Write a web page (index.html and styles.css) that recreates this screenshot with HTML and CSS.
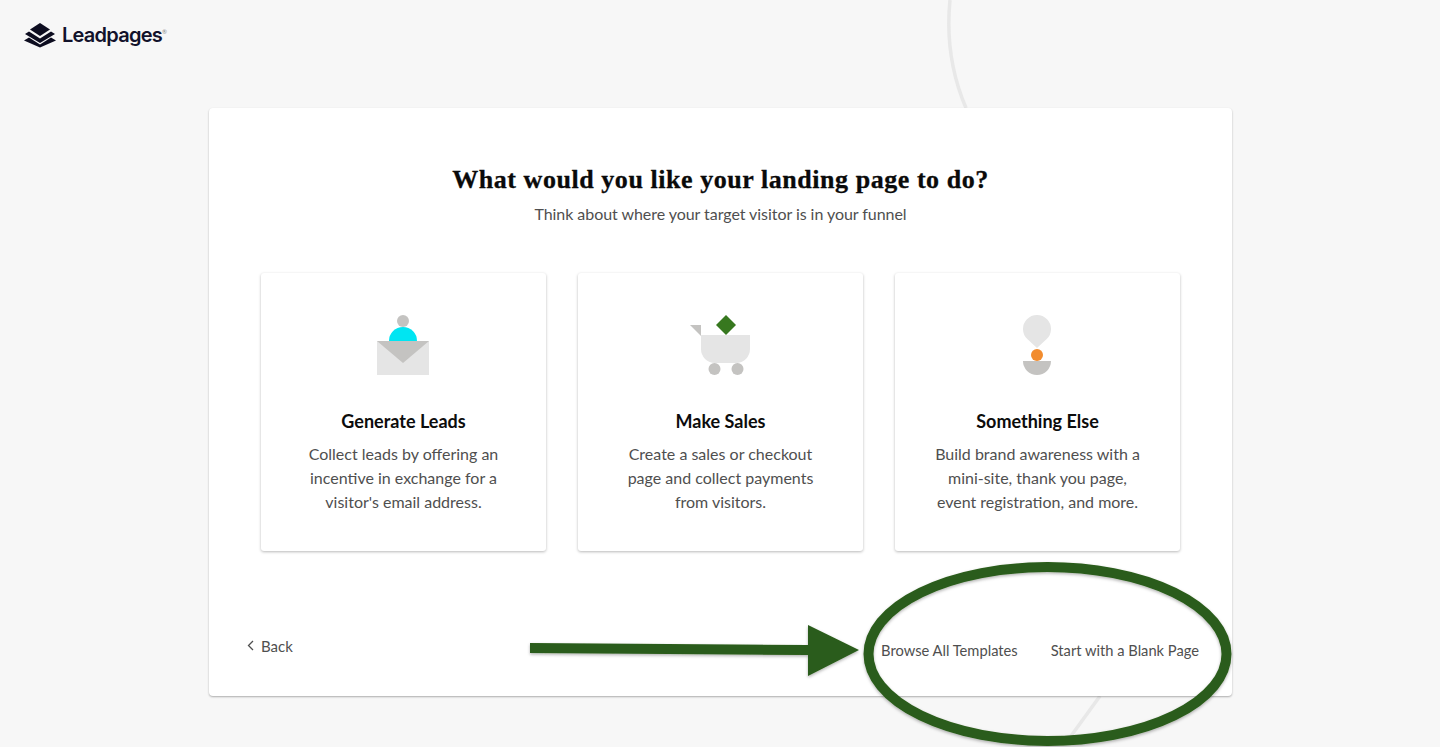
FILE: index.html
```html
<!DOCTYPE html>
<html lang="en">
<head>
    <meta charset="UTF-8">
    <meta name="viewport" content="width=device-width, initial-scale=1.0">
    <title>Leadpages - New landing page</title>
    <link rel="stylesheet" href="styles.css">
</head>
<body>
    <svg class="bg-curve" width="1440" height="747" viewBox="0 0 1440 747" aria-hidden="true">
        <path d="M950 0C946 40 952 75 966 108" />
        <path d="M1100 696L1071 736" />
    </svg>

    <header class="top-bar">
        <a class="logo" href="#">
            <svg width="32" height="26" viewBox="0 0 32 26" aria-hidden="true">
                <path class="logo-mark" d="M16 0L26 6.500L16 13L6 6.500Z" />
                <path class="logo-mark" d="M5 8.500L16 15.500L27 8.500L31 11L16 20L1 11Z" />
                <path class="logo-mark" d="M5 14.500L16 21.500L27 14.500L32 17.500L16 24.500L0 17.500Z" />
            </svg>
            <span class="logo-text">Leadpages</span><span class="logo-reg">®</span>
        </a>
    </header>

    <main class="panel">
        <h1 class="panel-title">What would you like your landing page to do?</h1>
        <p class="panel-sub">Think about where your target visitor is in your funnel</p>

        <div class="options">
            <div class="option">
                <svg class="option-icon" width="52" height="60" viewBox="0 0 52 60" aria-hidden="true">
                    <circle cx="26" cy="6" r="6" fill="#c4c3c1" />
                    <path d="M12 26A14 14 0 0 1 40 26Z" fill="#00e5f2" />
                    <rect x="0" y="26" width="52" height="34" fill="#e5e5e5" />
                    <path d="M0 26H52L26 48Z" fill="#c4c3c1" />
                </svg>
                <h2 class="option-title">Generate Leads</h2>
                <p class="option-text">Collect leads by offering an<br>incentive in exchange for a<br>visitor's email address.</p>
            </div>
            <div class="option">
                <svg class="option-icon" width="60" height="60" viewBox="0 0 60 60" aria-hidden="true">
                    <path d="M0 10H11V21Z" fill="#c4c3c1" />
                    <path d="M36 0L46 10L36 20L26 10Z" fill="#37781f" />
                    <path d="M11 20H60V34A14 14 0 0 1 46 48H25A14 14 0 0 1 11 34Z" fill="#e5e5e5" />
                    <circle cx="24.500" cy="54" r="6" fill="#c4c3c1" />
                    <circle cx="47.500" cy="54" r="6" fill="#c4c3c1" />
                </svg>
                <h2 class="option-title">Make Sales</h2>
                <p class="option-text">Create a sales or checkout<br>page and collect payments<br>from visitors.</p>
            </div>
            <div class="option">
                <svg class="option-icon" width="28" height="60" viewBox="0 0 28 60" aria-hidden="true">
                    <path d="M14 33L4.540 24.320A14 14 0 1 1 23.460 24.320Z" fill="#e5e5e5" />
                    <circle cx="14" cy="40" r="6" fill="#f28c2e" />
                    <path d="M0 46H28A14 14 0 0 1 0 46Z" fill="#c4c3c1" />
                </svg>
                <h2 class="option-title">Something Else</h2>
                <p class="option-text">Build brand awareness with a<br>mini-site, thank you page,<br>event registration, and more.</p>
            </div>
        </div>

        <div class="panel-footer">
            <a class="back-link" href="#">
                <svg width="7" height="11" viewBox="0 0 7 11" aria-hidden="true"><path d="M6 1L1.500 5.500L6 10" /></svg>
                Back
            </a>
            <div class="footer-links">
                <a href="#">Browse All Templates</a>
                <a href="#">Start with a Blank Page</a>
            </div>
        </div>
    </main>

    <!-- annotation drawn on top of the screenshot -->
    <svg class="markup" width="1440" height="747" viewBox="0 0 1440 747" aria-hidden="true">
        <defs>
            <filter id="markShadow" x="-5%" y="-5%" width="110%" height="115%">
                <feDropShadow dx="0" dy="1.500" stdDeviation="1.500" flood-color="#000" flood-opacity="0.3" />
            </filter>
        </defs>
        <g filter="url(#markShadow)">
            <ellipse cx="1047.500" cy="654" rx="179" ry="87" fill="none" stroke="#2a5c1a" stroke-width="10" />
            <path d="M530 643L808 645V625L859 650L808 676V655L530 653Z" fill="#2a5c1a" />
        </g>
    </svg>
</body>
</html>
```

FILE: styles.css
```css
html, body { height: 100%; }
body { margin: 0; background: #f7f7f7; overflow: hidden; font-family: "Lato", "Liberation Sans", sans-serif; color: #4f4f4f; }
a { color: inherit; text-decoration: none; }

.bg-curve { position: absolute; top: 0; left: 0; }
.bg-curve path { fill: none; stroke: #e8e8e8; stroke-width: 3.500; }
.markup { position: absolute; top: 0; left: 0; pointer-events: none; }

.top-bar { position: relative; height: 108px; padding: 23px 0 0 24px; box-sizing: border-box; }
.logo { display: flex; align-items: flex-start; color: #12122b; }
.logo-mark { fill: #0d0d20; }
.logo-text { margin: 0 0 0 6px; font-family: "Inter", sans-serif; font-size: 20px; font-weight: 600; line-height: 25px; letter-spacing: -0.75px; }
.logo-reg { font-size: 6px; line-height: 18px; color: #888; }

.panel { position: relative; box-sizing: border-box; width: 1023px; height: 588px; margin: 0 auto 0 209px; padding: 54px 52px 0; background: #fff; border-radius: 4px; box-shadow: 0 1px 2px rgba(0, 0, 0, 0.3); text-align: center; }
.panel-title { margin: 0; font-family: "Liberation Serif", serif; font-size: 26px; font-weight: 700; line-height: 36px; color: #0a0a0a; letter-spacing: 0.55px; -webkit-text-stroke: 0.3px #0a0a0a; }
.panel-sub { margin: 4px 0 0; font-size: 16px; line-height: 24px; letter-spacing: -0.05px; }

.options { display: flex; gap: 32px; margin-top: 47px; }
.option { flex: 1; height: 278px; box-sizing: border-box; padding-top: 42px; border-radius: 3px; box-shadow: 0 1px 3px rgba(0, 0, 0, 0.28); }
.option-icon { display: block; margin: 0 auto; padding-right: 1px; }
.option-title { margin: 33px 0 0; font-size: 18px; font-weight: 700; line-height: 26px; color: #0c0c0c; }
.option-text { margin: 8px 0 0; font-size: 16px; line-height: 24px; }

.panel-footer { display: flex; justify-content: space-between; align-items: center; margin: 89px -19px 0 -14px; }
.back-link { display: flex; align-items: center; gap: 7px; margin-top: -8px; font-size: 15px; }
.back-link svg { fill: none; stroke: #4f4f4f; stroke-width: 1.300; }
.footer-links { display: flex; gap: 33px; padding-top: 1px; font-size: 14.700px; }
```
